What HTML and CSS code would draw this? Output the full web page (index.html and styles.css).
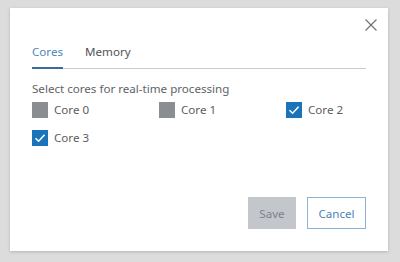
FILE: index.html
```html
<!DOCTYPE html>
<html lang="en">
<head>
    <meta charset="UTF-8">
    <meta name="viewport" content="width=device-width, initial-scale=1.0">
    <title>Cores</title>
    <link rel="stylesheet" href="styles.css">
</head>
<body>

<div class="dialog">
    <div class="dialog-head">
        <button class="close-btn" aria-label="Close">
            <svg width="12" height="12" viewBox="0 0 12 12">
                <path d="M0.5 0.5 L11.5 11.5 M11.5 0.5 L0.5 11.5" stroke="#6b6e72" stroke-width="1.1" fill="none"/>
            </svg>
        </button>
    </div>

    <div class="tabs">
        <span class="tab active">Cores</span>
        <span class="tab">Memory</span>
    </div>

    <p class="hint">Select cores for real-time processing</p>

    <div class="core-grid">
        <label class="core"><span class="box"></span>Core 0</label>
        <label class="core"><span class="box"></span>Core 1</label>
        <label class="core"><span class="box checked"><svg width="16" height="16" viewBox="0 0 16 16"><path d="M3.5 8.2 L6.6 11.2 L12.6 4.8" stroke="#fff" stroke-width="1.6" fill="none"/></svg></span>Core 2</label>
        <label class="core"><span class="box checked"><svg width="16" height="16" viewBox="0 0 16 16"><path d="M3.5 8.2 L6.6 11.2 L12.6 4.8" stroke="#fff" stroke-width="1.6" fill="none"/></svg></span>Core 3</label>
    </div>

    <div class="dialog-foot">
        <button class="btn btn-save" disabled>Save</button>
        <button class="btn btn-cancel">Cancel</button>
    </div>
</div>

</body>
</html>
```

FILE: styles.css
```css
/* Dialog "Cores" */
body {
    font-family: "Noto Sans", Arial, sans-serif;
    font-size: 11.6px;
    margin: 0;
    padding: 8px 12px 11px 10px;
    background-color: #dcdcdc;
    color: #4a4d51;
}
.dialog {
    width: 378px;
    height: 243px;
    box-sizing: border-box;
    background: #ffffff;
    padding: 0 22px 22px;
    box-shadow: 0 1px 3px rgba(0, 0, 0, 0.18);
    display: flex;
    flex-direction: column;
}
.dialog-head {
    height: 36px;
    display: flex;
    justify-content: flex-end;
    align-items: flex-start;
    margin-right: -11px;
}
.close-btn {
    margin-top: 11px;
    width: 12px;
    height: 12px;
    padding: 0;
    border: none;
    background: none;
    cursor: pointer;
}
.close-btn svg {
    display: block;
}
.tabs {
    display: flex;
    gap: 22px;
    border-bottom: 1px solid #c9cbcd;
}
.tab {
    line-height: 16px;
    padding-bottom: 7px;
    border-bottom: 2px solid transparent;
    margin-bottom: -1px;
    color: #505357;
}
.tab.active {
    color: #4b87ba;
    border-bottom-color: #3a6d99;
}
.hint {
    margin: 12px 0 5px;
    line-height: 16px;
    color: #606367;
}
.core-grid {
    display: grid;
    grid-template-columns: repeat(3, 127px);
    row-gap: 12px;
}
.core {
    display: flex;
    align-items: center;
    gap: 6px;
    line-height: 16px;
    color: #5a5d61;
}
.box {
    width: 16px;
    height: 16px;
    background: #8a8d91;
    display: block;
}
.box.checked {
    background: #1b74ba;
}
.box svg {
    display: block;
}
.dialog-foot {
    margin-top: auto;
    display: flex;
    justify-content: flex-end;
    gap: 11px;
}
.btn {
    height: 32px;
    font-family: inherit;
    font-size: 11.6px;
    padding: 0 8px;
    box-sizing: border-box;
}
.btn-save {
    width: 48px;
    background: #c3c7cc;
    color: #7e8288;
    border: none;
}
.btn-cancel {
    width: 59px;
    background: #fff;
    color: #4a84b8;
    border: 1px solid #8db2d4;
    cursor: pointer;
}
```
